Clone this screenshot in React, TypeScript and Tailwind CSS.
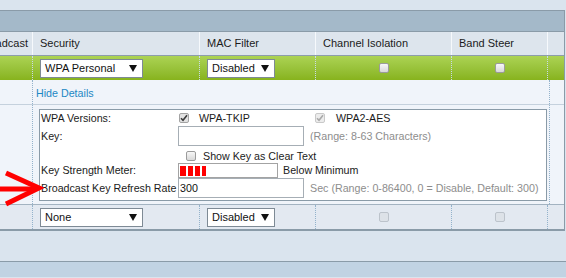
import React from 'react';

// Caret used by the plain selects
const Caret = () => (
  <svg width="8" height="7" viewBox="0 0 8 7" className="shrink-0">
    <path d="M0 0h8L4 7z" fill="#111" />
  </svg>
);

const Select = ({ label, wide }: { label: string; wide?: boolean }) => (
  <div
    className={`${wide ? 'w-[103px]' : 'w-[68px]'} h-[19px] shrink-0 bg-white border border-[#7e8a95] flex items-center justify-between pl-[4px] pr-[5px] text-[#111]`}
  >
    <span className="leading-none">{label}</span>
    <Caret />
  </div>
);

const Box = ({ disabled }: { disabled?: boolean }) => (
  <span
    className={
      disabled
        ? 'block shrink-0 w-[10px] h-[10px] rounded-[2px] border border-[#bcc3cb] bg-[#dde2e8]'
        : 'block shrink-0 w-[10px] h-[10px] rounded-[2px] border border-[#9b9b9b] bg-linear-to-b from-[#f7f7f7] to-[#d9d9d9]'
    }
  />
);

const Check = ({ faded }: { faded?: boolean }) => (
  <span
    className={`flex shrink-0 items-center justify-center w-[10px] h-[10px] rounded-[2px] border ${
      faded ? 'border-[#c9c9c9] bg-[#ececec]' : 'border-[#a3a3a3] bg-[#e2e2e2]'
    }`}
  >
    <svg width="8" height="8" viewBox="0 0 8 8">
      <path d="M1 4.2l2 2L7 1.2" fill="none" stroke={faded ? '#a9a9a9' : '#3a3a3a'} strokeWidth="1.6" />
    </svg>
  </span>
);

export default function App() {
  return (
    <div
      className="relative w-[566px] h-[278px] overflow-hidden bg-[#dae4ee] text-[11px] text-[#1b1b1b]"
      style={{ fontFamily: '"Liberation Sans", Arial, sans-serif' }}
    >
      <div className="h-[10px]" />

      {/* table */}
      <div className="w-[565px] border-t border-r border-b-2 border-[#8a9ba8]">
        <div className="h-[21px] bg-[#a4b9c9] border-b border-[#8a9ba8]" />

        {/* column headers */}
        <div className="flex h-[24px] bg-[#dde5ed] border-b border-[#8d9daa]">
          <div className="w-[32px] shrink-0 flex justify-end items-center overflow-hidden pr-[4px] whitespace-nowrap">Broadcast</div>
          <div className="w-[167px] shrink-0 border-l border-[#f6f9fc] flex items-center pl-[7px]">Security</div>
          <div className="w-[116px] shrink-0 border-l border-[#f6f9fc] flex items-center pl-[7px]">MAC Filter</div>
          <div className="w-[136px] shrink-0 border-l border-[#f6f9fc] flex items-center pl-[7px]">Channel Isolation</div>
          <div className="w-[96px] shrink-0 border-l border-[#f6f9fc] flex items-center pl-[7px]">Band Steer</div>
          <div className="w-[17px] shrink-0 border-l border-[#f6f9fc]" />
        </div>

        {/* active row */}
        <div className="flex h-[24px] bg-linear-to-b from-[#acd353] to-[#87b31c]">
          <div className="w-[32px] shrink-0" />
          <div className="w-[167px] shrink-0 border-l border-dotted border-[#c9dbe9] flex items-center pl-[7px]">
            <Select label="WPA Personal" wide />
          </div>
          <div className="w-[116px] shrink-0 border-l border-dotted border-[#c9dbe9] flex items-center pl-[7px]">
            <Select label="Disabled" />
          </div>
          <div className="w-[136px] shrink-0 border-l border-dotted border-[#c9dbe9] flex items-center justify-center">
            <Box />
          </div>
          <div className="w-[96px] shrink-0 border-l border-dotted border-[#c9dbe9] flex items-center justify-center">
            <Box />
          </div>
          <div className="w-[17px] shrink-0 border-l border-dotted border-[#c9dbe9]" />
        </div>

        {/* hide details */}
        <div className="flex h-[25px] bg-[#f0f4fa] border-b border-[#c5d1dd]">
          <div className="w-[32px] shrink-0" />
          <div className="w-[517px] shrink-0 border-l border-dotted border-[#93b2cb] flex items-center pl-[3px] pt-[2px] text-[10.7px] text-[#1c87c4]">
            Hide Details
          </div>
          <div className="w-[15px] shrink-0 border-l border-dotted border-[#93b2cb]" />
        </div>

        {/* details panel */}
        <div className="flex h-[100px] bg-[#f0f4fa] border-b border-[#a3b3c1]">
          <div className="w-[32px] shrink-0" />
          <div className="w-[517px] shrink-0 border-l border-dotted border-[#93b2cb] pl-[6px] pt-[4px]">
            <div className="w-[508px] bg-white border border-[#8a9ba8] pl-[1px] pb-[2px] text-[10.7px]">
              <div className="flex items-center h-[16px]">
                <span className="w-[138px] shrink-0">WPA Versions:</span>
                <div className="flex items-center w-[136px] shrink-0">
                  <Check />
                  <span className="ml-[10px]">WPA-TKIP</span>
                </div>
                <Check faded />
                <span className="ml-[11px]">WPA2-AES</span>
              </div>

              <div className="flex items-center h-[20px]">
                <span className="w-[137px] shrink-0">Key:</span>
                <div className="w-[126px] h-[20px] shrink-0 border border-[#a6aeb5] bg-white" />
                <span className="ml-[6px] text-[#8d8d8d] whitespace-nowrap">(Range: 8-63 Characters)</span>
              </div>

              <div className="flex items-center h-[17px] pt-[3px]">
                <span className="w-[145px] shrink-0" />
                <Box />
                <span className="ml-[7px]">Show Key as Clear Text</span>
              </div>

              <div className="flex items-center h-[15px]">
                <span className="w-[137px] shrink-0">Key Strength Meter:</span>
                <div className="w-[100px] h-[15px] shrink-0 border border-[#a3a3a3] bg-white flex items-center gap-[2px] pl-[1px]">
                  <span className="w-[6px] h-[10px] bg-[#f00]" />
                  <span className="w-[5px] h-[10px] bg-[#f00]" />
                  <span className="w-[5px] h-[10px] bg-[#f00]" />
                  <span className="w-[4px] h-[10px] bg-[#f00]" />
                </div>
                <span className="ml-[5px]">Below Minimum</span>
              </div>

              <div className="flex items-center h-[20px]">
                <span className="w-[137px] shrink-0 whitespace-nowrap">Broadcast Key Refresh Rate</span>
                <div className="w-[126px] h-[20px] shrink-0 border border-[#a6aeb5] bg-white flex items-center pl-[1px] text-[#111]">
                  300
                </div>
                <span className="ml-[6px] text-[#8d8d8d] whitespace-nowrap">
                  Sec (Range: 0-86400, 0 = Disable, Default: 300)
                </span>
              </div>
            </div>
          </div>
          <div className="w-[15px] shrink-0 border-l border-dotted border-[#93b2cb]" />
        </div>

        {/* next row */}
        <div className="flex h-[24px] bg-[#e3e9f1]">
          <div className="w-[32px] shrink-0" />
          <div className="w-[167px] shrink-0 border-l border-dotted border-[#93b2cb] flex items-center pl-[7px]">
            <Select label="None" wide />
          </div>
          <div className="w-[116px] shrink-0 border-l border-dotted border-[#93b2cb] flex items-center pl-[7px]">
            <Select label="Disabled" />
          </div>
          <div className="w-[136px] shrink-0 border-l border-dotted border-[#93b2cb] flex items-center justify-center">
            <Box disabled />
          </div>
          <div className="w-[96px] shrink-0 border-l border-dotted border-[#93b2cb] flex items-center justify-center">
            <Box disabled />
          </div>
          <div className="w-[17px] shrink-0 border-l border-dotted border-[#93b2cb]" />
        </div>
      </div>

      <div className="h-[30px]" />
      <div className="h-[16px] bg-[#c1d3e3] border-t border-[#8a9ba8]" />

      {/* red annotation arrow */}
      <svg className="absolute left-0 top-[168px]" width="44" height="42" viewBox="0 0 44 42">
        <g stroke="#f00" strokeWidth="5" fill="none" strokeLinecap="butt" strokeLinejoin="miter">
          <path d="M0 21H36" />
          <path d="M6 5L39 20L6 36" />
        </g>
      </svg>
    </div>
  );
}
